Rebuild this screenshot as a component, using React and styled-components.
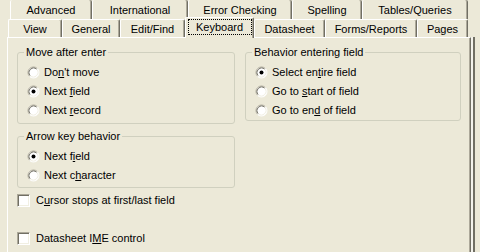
import React from "react";
import styled, { createGlobalStyle, css } from "styled-components";

const GlobalStyle = createGlobalStyle`
  html, body { margin: 0; padding: 0; background: #ece9d8; }
  body {
    font-family: "Liberation Sans", Arial, sans-serif;
    font-size: 11px;
    color: #000;
  }
`;

const Screen = styled.div`
  width: 480px;
  height: 252px;
  overflow: hidden;
  box-sizing: border-box;
  padding-left: 7px;
  background: #ece9d8;
`;

const TabControl = styled.div`
  width: 464px;
  height: 100%;
  display: flex;
  flex-direction: column;
`;

const TabRow = styled.div`
  display: flex;
  align-items: flex-end;
  height: ${p => p.$h}px;
  padding-left: ${p => p.$indent}px;
  flex-shrink: 0;
`;

const Tab = styled.div`
  box-sizing: border-box;
  position: relative;
  width: ${p => p.$w}px;
  height: ${p => p.$h}px;
  display: flex;
  align-items: center;
  justify-content: center;
  white-space: nowrap;
  background: #ece9d8;
  border-left: 1px solid #fff;
  border-right: 1px solid #716f64;
  border-top: ${p => (p.$top ? "1px solid #fff" : "none")};
  border-radius: 2px 2px 0 0;
  box-shadow: inset -1px 0 #aca899;
  ${p =>
    p.$active &&
    css`
      height: 21px;
      margin-bottom: -1px;
      z-index: 2;
    `}
`;

const FocusLabel = styled.span`
  box-sizing: border-box;
  display: flex;
  align-items: center;
  justify-content: center;
  width: calc(100% - 3px);
  height: 16px;
  margin-bottom: 2px;
  border: 1px dotted #000;
`;

const Panel = styled.div`
  flex: 1;
  box-sizing: border-box;
  border-top: 1px solid #fff;
  border-left: 1px solid #fff;
  border-right: 1px solid #716f64;
  box-shadow: inset -1px 0 #aca899, 2px 0 0 #f4f3ec, 4px 0 0 #716f64;
  padding: 8px 0 0 9px;
  display: grid;
  grid-template-columns: 218px 216px;
  column-gap: 10px;
  align-items: start;
`;

const Column = styled.div`
  display: flex;
  flex-direction: column;
`;

const Group = styled.fieldset`
  margin: ${p => p.$mt || 0}px 0 0;
  padding: 4px 0 ${p => p.$pb}px 8px;
  border: 1px solid #d0d0bf;
  border-radius: 3px;
  min-width: 0;
`;

const Legend = styled.legend`
  padding: 0 2px;
  margin-left: -2px;
  line-height: 13px;
  font-size: 11px;
`;

const Option = styled.label`
  display: flex;
  align-items: center;
  gap: 4px;
  height: 19px;
  padding-left: 1px;
  white-space: nowrap;
`;

const CheckRow = styled.label`
  display: flex;
  align-items: center;
  gap: 6px;
  height: 19px;
  margin-top: ${p => p.$mt}px;
  white-space: nowrap;
`;

const Caption = styled.span`
  line-height: 13px;
`;

const Box = styled.span`
  box-sizing: border-box;
  width: 13px;
  height: 13px;
  flex-shrink: 0;
  background: #fff;
  border: 1px solid;
  border-color: #aca899 #fff #fff #aca899;
  box-shadow: inset 1px 1px #716f64, inset -1px -1px #f1efe2;
`;

const Key = styled.span`
  text-decoration: underline;
  text-underline-offset: 1px;
`;

const Radio = ({ checked }) => (
  <svg width="13" height="13" viewBox="0 0 13 13" style={{ flexShrink: 0 }}>
    <circle cx="6.5" cy="6.5" r="5.5" fill="#fff" />
    <path d="M2.61 10.39 A5.5 5.5 0 0 1 10.39 2.61" fill="none" stroke="#aca899" strokeWidth="1" />
    <path d="M10.39 2.61 A5.5 5.5 0 0 1 2.61 10.39" fill="none" stroke="#fff" strokeWidth="1" />
    <path d="M3.32 9.68 A4.5 4.5 0 0 1 9.68 3.32" fill="none" stroke="#716f64" strokeWidth="1" />
    <path d="M9.68 3.32 A4.5 4.5 0 0 1 3.32 9.68" fill="none" stroke="#f1efe2" strokeWidth="1" />
    {checked && <circle cx="6.5" cy="6.5" r="2" fill="#000" />}
  </svg>
);

const backTabs = [
  { label: "Advanced", w: 82 },
  { label: "International", w: 96 },
  { label: "Error Checking", w: 104 },
  { label: "Spelling", w: 70 },
  { label: "Tables/Queries", w: 106 },
];

const frontTabs = [
  { label: "View", w: 54 },
  { label: "General", w: 58 },
  { label: "Edit/Find", w: 65 },
  { label: "Keyboard", w: 69, active: true },
  { label: "Datasheet", w: 71 },
  { label: "Forms/Reports", w: 92 },
  { label: "Pages", w: 51 },
];

export default function App() {
  return (
    <>
      <GlobalStyle />
      <Screen>
        <TabControl>
          <TabRow $h={19} $indent={3}>
            {backTabs.map(t => (
              <Tab key={t.label} $w={t.w} $h={19}>
                {t.label}
              </Tab>
            ))}
          </TabRow>
          <TabRow $h={18} $indent={1}>
            {frontTabs.map(t => (
              <Tab key={t.label} $w={t.w} $h={18} $top $active={t.active}>
                {t.active ? <FocusLabel>{t.label}</FocusLabel> : t.label}
              </Tab>
            ))}
          </TabRow>
          <Panel>
            <Column>
              <Group $pb={3}>
                <Legend>Move after enter</Legend>
                <Option><Radio /><Caption>Do<Key>n</Key>'t move</Caption></Option>
                <Option><Radio checked /><Caption>Next <Key>f</Key>ield</Caption></Option>
                <Option><Radio /><Caption>Next <Key>r</Key>ecord</Caption></Option>
              </Group>
              <Group $mt={6} $pb={2}>
                <Legend>Arrow key behavior</Legend>
                <Option><Radio checked /><Caption>Next f<Key>i</Key>eld</Caption></Option>
                <Option><Radio /><Caption>Next c<Key>h</Key>aracter</Caption></Option>
              </Group>
              <CheckRow $mt={3}>
                <Box /><Caption>C<Key>u</Key>rsor stops at first/last field</Caption>
              </CheckRow>
              <CheckRow $mt={19}>
                <Box /><Caption>Datasheet I<Key>M</Key>E control</Caption>
              </CheckRow>
            </Column>
            <Column>
              <Group $pb={0}>
                <Legend>Behavior entering field</Legend>
                <Option><Radio checked /><Caption>Select en<Key>t</Key>ire field</Caption></Option>
                <Option><Radio /><Caption>Go to <Key>s</Key>tart of field</Caption></Option>
                <Option><Radio /><Caption>Go to en<Key>d</Key> of field</Caption></Option>
              </Group>
            </Column>
          </Panel>
        </TabControl>
      </Screen>
    </>
  );
}
